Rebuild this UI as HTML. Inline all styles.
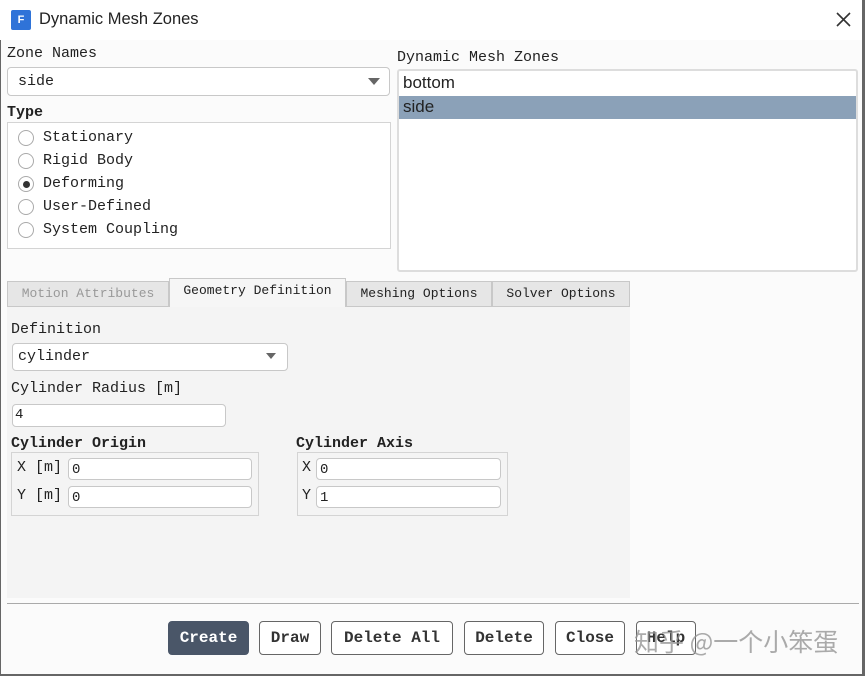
<!DOCTYPE html>
<html><head><meta charset="utf-8"><style>
*{box-sizing:border-box;margin:0;padding:0}
body{width:865px;height:676px;overflow:hidden;background:#fff;font-family:"Liberation Mono","Noto Sans CJK SC",monospace;color:#222;position:relative}
.win{position:absolute;left:0;top:0;width:865px;height:676px;border:1px solid #666;border-right:3px solid #666;border-bottom:2px solid #666;background:#fbfbfb}
.in{position:absolute;left:-1px;top:-1px;width:865px;height:676px}
.a{position:absolute}
.t{font-size:15px;white-space:nowrap}
.b{font-weight:bold}
.box{position:absolute;border:1px solid #d4d4d4;background:#fff}
.inp{position:absolute;border:1px solid #c8c8c8;border-radius:4px;background:#fff;font-size:14px;padding-left:5px}
.tri{position:absolute;width:0;height:0;border-left:6px solid transparent;border-right:6px solid transparent;border-top:7px solid #666}
.rad{position:absolute;width:16px;height:16px;border:1px solid #aaa;border-radius:50%;background:#fff}
.tab{position:absolute;top:281px;height:26px;border:1px solid #c8c8c8;background:#e6e6e6;font-size:13px;text-align:center;line-height:24px}
.btn{position:absolute;top:621px;height:34px;border:1px solid #666;border-radius:4px;background:#fff;font-size:16px;font-weight:bold;text-align:center;line-height:32px;color:#333}
</style></head><body><div class="win"><div class="in">
<div class="a" style="left:0;top:0;width:862px;height:40px;background:#fff"></div>
<div class="a" style="left:11px;top:10px;width:20px;height:20px;background:#2f73d8;border-radius:2px;color:#fff;font:bold 11px 'Liberation Sans',sans-serif;text-align:center;line-height:20px">F</div>
<div class="a" style="left:39px;top:10px;font:16.5px 'Liberation Sans',sans-serif;color:#222">Dynamic Mesh Zones</div>
<svg class="a" style="left:836px;top:12px" width="15" height="15"><path d="M1 1L14 14M14 1L1 14" stroke="#333" stroke-width="1.6"/></svg>

<div class="a t" style="left:7px;top:45px">Zone Names</div>
<div class="inp" style="left:7px;top:67px;width:383px;height:29px;line-height:27px;font-size:15px;padding-left:10px">side</div>
<div class="tri" style="left:368px;top:78px"></div>
<div class="a t b" style="left:7px;top:104px">Type</div>
<div class="box" style="left:7px;top:122px;width:384px;height:127px"></div>
<div class="rad" style="left:18px;top:130px"></div><div class="a t" style="left:43px;top:129px">Stationary</div>
<div class="rad" style="left:18px;top:153px"></div><div class="a t" style="left:43px;top:152px">Rigid Body</div>
<div class="rad" style="left:18px;top:176px"></div><div class="a" style="left:23px;top:181px;width:7px;height:7px;border-radius:50%;background:#333"></div><div class="a t" style="left:43px;top:175px">Deforming</div>
<div class="rad" style="left:18px;top:199px"></div><div class="a t" style="left:43px;top:198px">User-Defined</div>
<div class="rad" style="left:18px;top:222px"></div><div class="a t" style="left:43px;top:221px">System Coupling</div>

<div class="a t" style="left:397px;top:49px">Dynamic Mesh Zones</div>
<div class="box" style="left:397px;top:69px;width:461px;height:203px;border:2px solid #ddd;border-radius:3px"></div>
<div class="a" style="left:403px;top:73px;font:17px 'Liberation Sans',sans-serif">bottom</div>
<div class="a" style="left:399px;top:96px;width:457px;height:23px;background:#8ba1b8"></div>
<div class="a" style="left:403px;top:97px;font:17px 'Liberation Sans',sans-serif">side</div>

<div class="tab" style="left:7px;width:162px;color:#999">Motion Attributes</div>
<div class="tab" style="left:169px;top:278px;width:177px;height:30px;background:#f6f6f6;border-bottom:none">Geometry Definition</div>
<div class="tab" style="left:346px;width:146px">Meshing Options</div>
<div class="tab" style="left:492px;width:138px">Solver Options</div>
<div class="a" style="left:7px;top:307px;width:623px;height:291px;background:#f4f4f4"></div>
<div class="a t" style="left:11px;top:321px">Definition</div>
<div class="inp" style="left:12px;top:343px;width:276px;height:28px;line-height:26px;font-size:15px">cylinder</div>
<div class="tri" style="left:266px;top:353px;border-width:6px 5px 0 5px"></div>
<div class="a t" style="left:11px;top:380px">Cylinder Radius [m]</div>
<div class="inp" style="left:12px;top:404px;width:214px;height:23px;line-height:21px;padding-left:2px">4</div>
<div class="a t b" style="left:11px;top:435px">Cylinder Origin</div>
<div class="box" style="left:11px;top:452px;width:248px;height:64px;background:#f4f4f4"></div>
<div class="a t" style="left:17px;top:459px">X [m]</div>
<div class="inp" style="left:68px;top:458px;width:184px;height:22px;line-height:22px;padding-left:3px">0</div>
<div class="a t" style="left:17px;top:487px">Y [m]</div>
<div class="inp" style="left:68px;top:486px;width:184px;height:22px;line-height:22px;padding-left:3px">0</div>
<div class="a t b" style="left:296px;top:435px">Cylinder Axis</div>
<div class="box" style="left:297px;top:452px;width:211px;height:64px;background:#f4f4f4"></div>
<div class="a t" style="left:302px;top:459px">X</div>
<div class="inp" style="left:316px;top:458px;width:185px;height:22px;line-height:22px;padding-left:3px">0</div>
<div class="a t" style="left:302px;top:487px">Y</div>
<div class="inp" style="left:316px;top:486px;width:185px;height:22px;line-height:22px;padding-left:3px">1</div>

<div class="a" style="left:7px;top:603px;width:852px;height:1px;background:#aaa"></div>
<div class="btn" style="left:168px;width:81px;background:#4a5668;color:#fff;border-color:#4a5668">Create</div>
<div class="btn" style="left:259px;width:62px">Draw</div>
<div class="btn" style="left:331px;width:122px">Delete All</div>
<div class="btn" style="left:464px;width:80px">Delete</div>
<div class="btn" style="left:555px;width:70px">Close</div>
<div class="btn" style="left:636px;width:60px">Help</div>
<div class="a" style="left:634px;top:623px;font:25px 'Noto Sans CJK SC',sans-serif;color:rgba(150,150,150,0.8);white-space:nowrap">知乎 @一个小笨蛋</div>
</div></div></body></html>
